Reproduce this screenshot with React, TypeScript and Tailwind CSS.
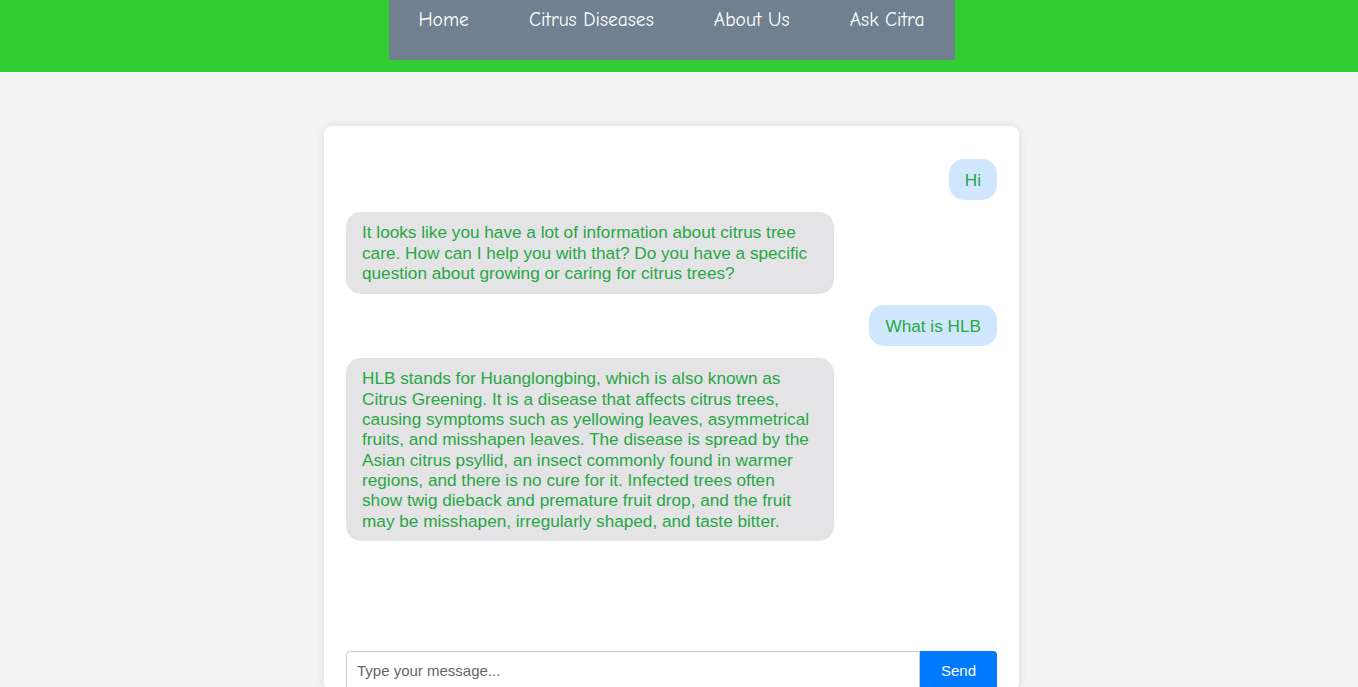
import React from "react";

const msgs: { from: "user" | "bot"; text: string }[] = [
  { from: "user", text: "Hi" },
  {
    from: "bot",
    text: "It looks like you have a lot of information about citrus tree care. How can I help you with that? Do you have a specific question about growing or caring for citrus trees?",
  },
  { from: "user", text: "What is HLB" },
  {
    from: "bot",
    text: "HLB stands for Huanglongbing, which is also known as Citrus Greening. It is a disease that affects citrus trees, causing symptoms such as yellowing leaves, asymmetrical fruits, and misshapen leaves. The disease is spread by the Asian citrus psyllid, an insect commonly found in warmer regions, and there is no cure for it. Infected trees often show twig dieback and premature fruit drop, and the fruit may be misshapen, irregularly shaped, and taste bitter.",
  },
];

export default function App() {
  return (
    <div className="min-h-[687px] bg-[#f4f4f4] font-['Liberation_Sans',Arial,sans-serif]">
      <header className="bg-[#32cd32] h-[72px] flex justify-center pr-[15px]">
        <nav className="w-[566px] h-[60px] bg-[#708090] flex justify-between px-[30px] font-['Comic_Sans_MS','Comic_Neue',cursive] font-medium text-white text-[19.5px] leading-[40px]">
          <a>Home</a>
          <a>Citrus Diseases</a>
          <a>About Us</a>
          <a>Ask Citra</a>
        </nav>
      </header>
      <main className="flex justify-center pr-[15px] pt-[54px]">
        <div className="w-[695px] bg-white rounded-[8px] shadow-[0_0_10px_rgba(0,0,0,0.1)] px-[22px] pt-[33px]">
          <div className="h-[492px] flex flex-col gap-[11.5px]">
            {msgs.map((m, i) => (
              <div
                key={i}
                className={
                  m.from === "user"
                    ? "self-end max-w-[75%] bg-[#cfe6fc] rounded-[15px] px-[16px] py-[10.5px] text-[17.2px] leading-[20.3px] text-[#28a745]"
                    : "self-start max-w-[75%] bg-[#e4e4e6] rounded-[15px] px-[16px] py-[10.5px] text-[17.2px] leading-[20.3px] text-[#28a745]"
                }
              >
                {m.text}
              </div>
            ))}
          </div>
          <div className="flex h-[40px]">
            <input
              className="flex-1 border border-[#ccc] rounded-l-[4px] px-[10px] text-[15px] text-[#333] placeholder-[#666] outline-none"
              placeholder="Type your message..."
            />
            <button className="w-[77px] bg-[#007bff] text-white text-[15px] rounded-r-[4px]">
              Send
            </button>
          </div>
        </div>
      </main>
    </div>
  );
}
